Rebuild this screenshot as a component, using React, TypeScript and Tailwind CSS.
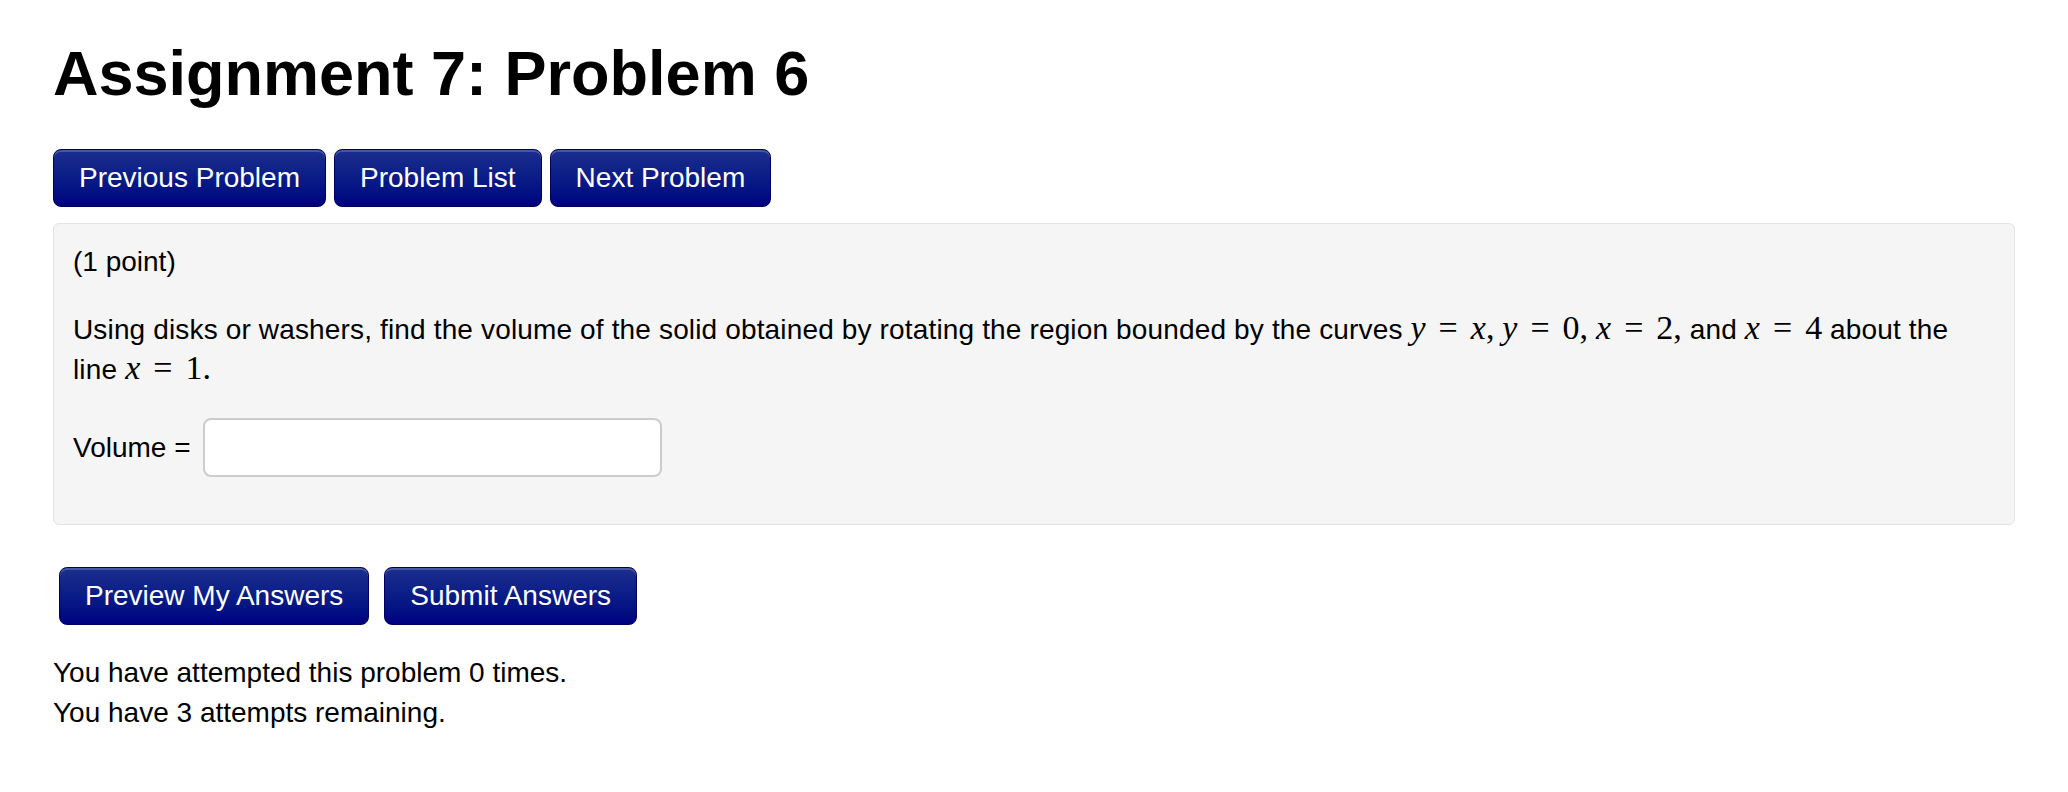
const navButton =
  'rounded-[8px] border border-[#00005e] bg-gradient-to-b from-[#1b2d8d] to-[#000080] px-[25px] py-[8px] text-[28px] leading-[40px] text-white shadow-[inset_0_2px_0_rgba(255,255,255,0.2)]';

// MathJax-ish inline equation: italic variables, upright numbers, spaced relation
function Eq({ l, r, tail = '' }: { l: string; r: string; tail?: string }) {
  const isVar = /^[a-z]$/.test(r);
  return (
    <span className="whitespace-nowrap font-['Liberation_Serif',serif] text-[34px] leading-none tracking-normal">
      <span className="italic">{l}</span>
      <span className="mx-[13px]">=</span>
      <span className={isVar ? 'italic' : ''}>{r}</span>
      {tail}
    </span>
  );
}

export default function App() {
  return (
    <div className="min-h-screen bg-white px-[53px] font-['Liberation_Sans',Arial,sans-serif] text-[28px] leading-[40px] text-black">
      <h1 className="pt-[35px] text-[63px] font-bold leading-[76px]">Assignment 7: Problem 6</h1>

      <div className="mt-[38px] flex gap-[8px]">
        <button className={navButton}>Previous Problem</button>
        <button className={navButton}>Problem List</button>
        <button className={navButton}>Next Problem</button>
      </div>

      <div className="mt-[16px] rounded-[6px] border border-[#e3e3e3] bg-[#f5f5f5] px-[19px] pt-[18px] pb-[47px]">
        <p>(1 point)</p>
        <p className="mt-[28px] tracking-[0.15px]">
          Using disks or washers, find the volume of the solid obtained by rotating the region bounded by the curves{' '}
          <Eq l="y" r="x" tail="," /> <Eq l="y" r="0" tail="," /> <Eq l="x" r="2" tail="," /> and <Eq l="x" r="4" /> about the{' '}
          <span className="whitespace-nowrap">
            line <Eq l="x" r="1" tail="." />
          </span>
        </p>
        <div className="mt-[28px] flex items-center">
          <span>Volume =</span>
          <input
            type="text"
            className="ml-[12px] h-[59px] w-[459px] rounded-[8px] border-2 border-[#cccccc] bg-white px-3 outline-none"
          />
        </div>
      </div>

      <div className="mt-[42px] flex gap-[15px] pl-[6px]">
        <button className={navButton}>Preview My Answers</button>
        <button className={navButton}>Submit Answers</button>
      </div>

      <div className="mt-[28px]">
        <p>You have attempted this problem 0 times.</p>
        <p>You have 3 attempts remaining.</p>
      </div>
    </div>
  );
}
